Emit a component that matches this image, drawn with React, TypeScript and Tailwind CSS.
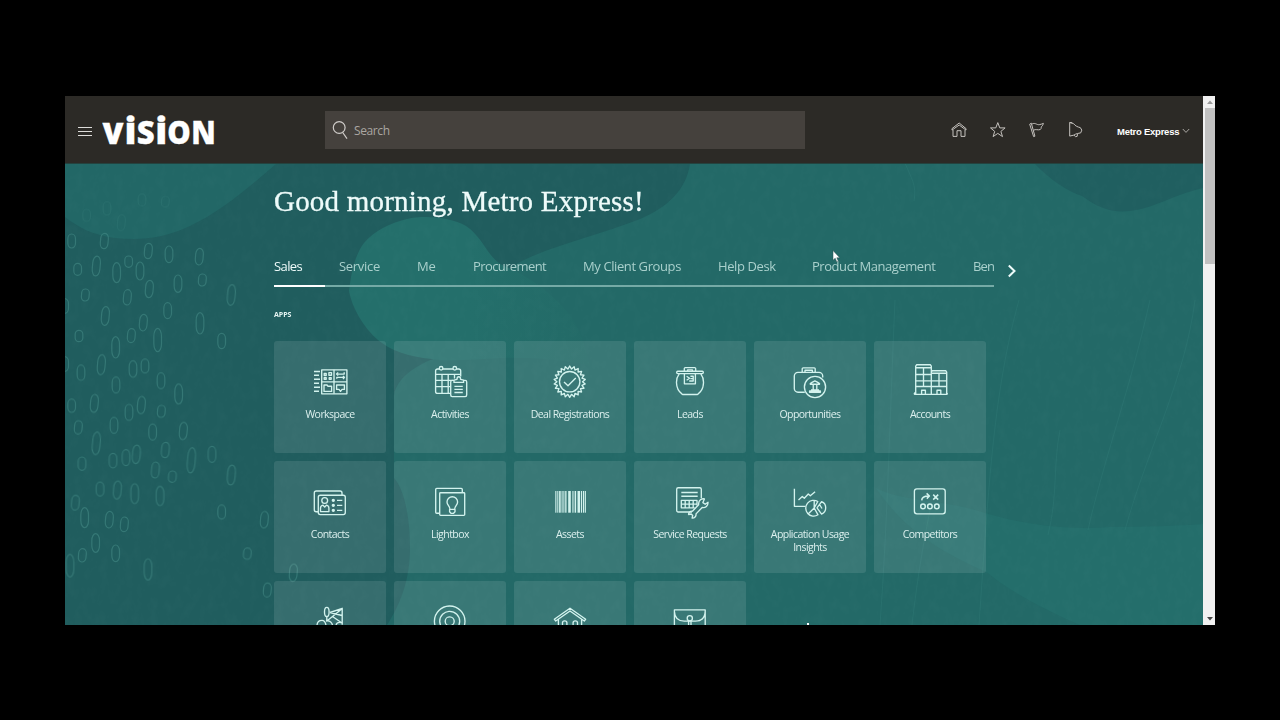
import type { ReactNode } from "react";

const tabs = [
  { label: "Sales", cls: "w-[65px] tracking-[-0.6px] text-[#eefbfa]" },
  { label: "Service", cls: "w-[78px] tracking-[-0.3px]" },
  { label: "Me", cls: "w-[56px] tracking-[-0.3px]" },
  { label: "Procurement", cls: "w-[110px] tracking-[-0.6px]" },
  { label: "My Client Groups", cls: "w-[135px] tracking-[-0.4px]" },
  { label: "Help Desk", cls: "w-[94px] tracking-[-0.4px]" },
  { label: "Product Management", cls: "w-[161px] tracking-[-0.45px]" },
  { label: "Ben", cls: "w-[21px] tracking-[-0.9px]" },
];

const burst = Array.from({ length: 44 }, (_, i) => {
  const r = i % 2 ? 12.8 : 15.7;
  const a = (i * Math.PI) / 22 - Math.PI / 2;
  return `${(19.7 + r * Math.cos(a)).toFixed(2)},${(20.7 + r * Math.sin(a)).toFixed(2)}`;
}).join(" ");

const bars: [number, number][] = [
  [5.3, 1.1], [7.3, 1], [9.1, 1.6], [11.6, 1], [13.4, 1], [15.2, 1.3], [18.2, 2.6], [22.4, 1.1],
  [24.6, 1.5], [27.5, 2.6], [31, 1.1], [33, 1.3], [35, 0.9],
];

const icons: Record<string, ReactNode> = {
  workspace: (
    <>
      <rect x="11.7" y="8.8" width="25.2" height="24" />
      <path d="M24 8.8v24M11.7 20.8h25.2M4 10.5h6M4 14.2h5M4 18.2h6M4 22.2h5M4 26.2h6M4 30.2h5" />
      <path d="M14.2 12.5h2v2h-2zM18.9 11.6h2.6v2.6h-2.6zM14.2 16.6h2v1.6h-2zM19.2 16.6h2v1.6h-2z" />
      <path d="M26.8 17.800v-1.400h7.600M34.200 11.300v1.800h-7.400M14 24h3l1 1.200h3.600v5.200H14zM26.6 24h7.8v4.4h-2.4l-1.500 2-1.500-2h-2.400z" />
      <path d="M28.200 11.500l-1.600 1.600 1.600 1.400M33 14.900l1.500 1.500-1.500 1.600" />
    </>
  ),
  activities: (
    <>
      <path d="M20.4 32.4H7.6a2 2 0 0 1-2-2V10a2 2 0 0 1 2-2h2M12.6 8h10.4M26.4 8h2.3a2 2 0 0 1 2 2v5.5" />
      <path d="M5.7 13.4h25M5.7 19.4h17M5.7 25.6h14.6M12 13.4v19M18.2 13.4v19M24.5 13.4v4" />
      <circle cx="11.1" cy="7.3" r="1.8" />
      <circle cx="24.8" cy="7.3" r="1.8" />
      <path d="M23.6 19.4h-1.4a1.5 1.5 0 0 0-1.5 1.5v13.2a1.5 1.5 0 0 0 1.5 1.5h13a1.5 1.5 0 0 0 1.5-1.5V20.9a1.5 1.5 0 0 0-1.5-1.5h-1.4M24 21.4v-2.2l3-.9c0-3.4 3.6-3.4 3.6 0l3 .9v2.2zM24.4 25.3h8.4M24.4 28.4h8.4M24.4 31.5h8.4" />
    </>
  ),
  deals: (
    <>
      <polygon points={burst} />
      <circle cx="19.7" cy="20.7" r="10.2" />
      <path d="M14 21l4 3.8 7.8-7.8" />
    </>
  ),
  leads: (
    <>
      <rect x="6.7" y="10.2" width="26.6" height="2.4" rx="1" />
      <path d="M14.3 10.2V7.600a1 1 0 0 1 1-1h9.400a1 1 0 0 1 1 1v2.600M17.600 10V8.800h4.800V10" />
      <path d="M9.200 12.800C7.200 15.400 6.400 18.600 6.500 21.800c.1 4.800 2.400 9 5.600 11.300q.6.400 1.400.4h13q.8 0 1.400-.4c3.200-2.300 5.500-6.500 5.600-11.300.1-3.200-.7-6.400-2.700-9" />
      <path d="M14.400 12.600v10.200h11V12.600M16.600 15.200l3 2-3 2M20.400 15.200h2.800v4.800h-4M20.400 17.600h2.800" />
    </>
  ),
  opportunities: (
    <>
      <path d="M14.800 31.200H8a3.700 3.700 0 0 1-3.700-3.700V15A3.700 3.700 0 0 1 8 11.300h21a3.700 3.700 0 0 1 3.700 3.700v1.600" />
      <path d="M12.200 11.300V7.800a1 1 0 0 1 1-1h11a1 1 0 0 1 1 1v3.500M15 11V9.200h7.400V11" />
      <circle cx="25" cy="26" r="10.600" />
      <path d="M20.300 22.600c1.500-1.200 3-1.900 4.600-2.700 1.600.8 3.100 1.500 4.600 2.700v.6h-9.200zM23.200 23.600v5M26.800 23.600v5M21 28.800h8M19.600 31.200h10.800v-1.300H19.600z" />
    </>
  ),
  accounts: (
    <>
      <path d="M5.700 33V5.200l1-1.500h13.600l1 1.500V33M21.300 11.200l1-1.500h13.400l1 1.500V33M4 33.400h33.600M4 33.400l1.200-2.200M37.600 33.400l-1.200-2.200" />
      <path d="M5.700 6.700h15.600M5.700 13.500h15.600M5.700 19.800h31M5.700 25.500h31M21.300 12.200h15.400M13.500 6.700v19M29 12.200v13.400M11.600 33.200v-4h3.800v4M27 33.200v-4h3.800v4" />
    </>
  ),
  contacts: (
    <>
      <path d="M8 30.700H6.300a2 2 0 0 1-2-2V12a2 2 0 0 1 2-2H30a2 2 0 0 1 2 2v2" />
      <rect x="8.300" y="14.200" width="27" height="19.400" rx="2" />
      <circle cx="14.700" cy="19.500" r="2.900" />
      <path d="M13 24.200c-1.800.4-2.500 1.200-2.500 2.800v3.600h8.400V27c0-1.600-.7-2.400-2.500-2.800l-1.700 1.800zM27 19.300h5.300M27 24.300h5.300M27 29.300h5.300" />
      <g fill="currentColor"><circle cx="23.300" cy="19.300" r="1" /><circle cx="23.300" cy="24.300" r="1" /><circle cx="23.300" cy="29.300" r="1" /></g>
    </>
  ),
  lightbox: (
    <>
      <path d="M9.500 32.200H6.700a1 1 0 0 1-1-1V8.400a1 1 0 0 1 1-1h24.600a1 1 0 0 1 1 1v3" />
      <rect x="9.700" y="11.700" width="25" height="22.600" rx=".8" />
      <path d="M20 28.400c0-3.400-3-4-3-7.400a5.300 5.300 0 0 1 10.600 0c0 3.400-3 4-3 7.400zM19.600 28.400h5.400v2.400l-1.400 1.500h-2.600l-1.400-1.500z" />
    </>
  ),
  assets: (
    <g fill="currentColor" stroke="none">
      {bars.map(([x, w]) => <rect key={x} x={x} y="10" width={w} height="21.700" />)}
    </g>
  ),
  requests: (
    <>
      <path d="M22 31H8.200a1.500 1.500 0 0 1-1.500-1.500V8.200a1.500 1.500 0 0 1 1.500-1.500h21.600a1.500 1.500 0 0 1 1.500 1.500V17M11.300 11.500h16.400M11.300 15.200h16.400" />
      <path d="M27 24.600v-5.200H11.300v7.400h13.400M11.300 23.100h15.800M15.200 19.400v7.400M19.200 19.400v7.400M23.200 19.400v7.400" />
      <path d="M34.400 17.900c-2.700-.6-5.500 1-5.700 4.200l-.1 1.600-6.200 6.500c-2.300-.2-3.900 1.400-3.800 3.300l2.600-.5 1.500 1.500-.6 2.600c2.400.2 4.300-1.700 3.900-4.200l6.200-6.400c3.300.6 6-1.800 5.800-5.200l-2.800 1.900-2.300-1.600z" />
    </>
  ),
  usage: (
    <>
      <path d="M4.400 7.700V25.300h11.200M8.500 19l3.800-3.500 2 1.800 4-4.300 2 1.700 4.800-4" />
      <path d="M27.800 20.500A7.900 7.900 0 1 0 28 33.800L24.200 27zM24.200 27V19.200M24.200 27l-5.600 5.400" />
      <path d="M27 26.800l4.600-6.200c2.600 1 4.100 3.400 4.100 6.200s-1.500 5.200-4.100 6.300zM29.500 23.500l2.500 4" />
    </>
  ),
  competitors: (
    <>
      <rect x="4.400" y="7.800" width="30.800" height="25" rx="2.500" />
      <g strokeWidth="1.500">
        <circle cx="13" cy="25.400" r="2.300" /><circle cx="19.900" cy="25.400" r="2.300" /><circle cx="26.800" cy="25.400" r="2.300" />
        <path d="M23.200 13.600l5 5M28.200 13.600l-5 5M11.700 19.400c.2-2.800 2.500-4.400 6.800-4.400M16.600 12.400l2.800 2.600-2.600 2.600" />
      </g>
    </>
  ),
  delivery: (
    <>
      <ellipse cx="16.800" cy="10.900" rx="2.300" ry="4.600" />
      <path d="M16.800 15.500V20M20 11.500l12.200-4.200v16.500M20 11.500l12 3M16.800 20l6-4.800 9.200-7.400M22.500 15.500L32 22M16 20c3-.6 5.500.4 6.500 4M26 24c.6-2 2.500-3 5-2.500M7 24c.3-3 2-4.600 5-4.600 2 0 3.200 1 4 4.600" />
    </>
  ),
  target: (
    <>
      <circle cx="19.700" cy="20.300" r="15.300" /><circle cx="19.700" cy="20.300" r="10" /><circle cx="19.700" cy="20.300" r="4.500" />
    </>
  ),
  house: (
    <>
      <path d="M4.300 18.200L20 7.200l15.700 11-1.400 1.800L20 10 5.700 20zM8.400 18.500V30M31.600 18.500V30" />
      <path d="M12.500 26v-4.200c0-2.600 4.400-2.600 4.400 0V26M23.100 26v-4.200c0-2.600 4.400-2.600 4.400 0V26" />
    </>
  ),
  portfolio: (
    <>
      <path d="M4.400 8.800h30.800V30H4.400zM4.400 10.500c.3 6.300 3.700 9.600 9.800 9.600h11.200c6.100 0 9.500-3.300 9.800-9.600" />
      <circle cx="19.800" cy="17.200" r="2.600" /><path d="M18.600 19.800v4.500M21 19.800v4.500" />
    </>
  ),
};

const apps = [
  { icon: "workspace", label: "Workspace" },
  { icon: "activities", label: "Activities" },
  { icon: "deals", label: "Deal Registrations" },
  { icon: "leads", label: "Leads" },
  { icon: "opportunities", label: "Opportunities" },
  { icon: "accounts", label: "Accounts" },
  { icon: "contacts", label: "Contacts" },
  { icon: "lightbox", label: "Lightbox" },
  { icon: "assets", label: "Assets" },
  { icon: "requests", label: "Service Requests" },
  { icon: "usage", label: "Application Usage Insights" },
  { icon: "competitors", label: "Competitors" },
  { icon: "delivery", label: "" },
  { icon: "target", label: "" },
  { icon: "house", label: "" },
  { icon: "portfolio", label: "" },
];

/* Raindrop outlines of the wallpaper: centre x, centre y, half height, in thirds of a pixel. */
const drops: [number, number, number][] = [
  [35, 243, 21], [133, 243, 23], [265, 273, 23], [327, 283, 25], [418, 290, 25], [53, 328, 18], [109, 318, 30],
  [170, 338, 30], [206, 305, 17], [240, 333, 27], [354, 371, 26], [427, 360, 18], [268, 387, 26], [202, 412, 23],
  [76, 405, 18], [514, 405, 31], [136, 468, 28], [323, 452, 24], [420, 490, 32], [250, 488, 25], [57, 528, 17],
  [214, 527, 21], [293, 540, 35], [167, 562, 32], [485, 543, 23], [124, 614, 30], [63, 638, 23], [219, 627, 25],
  [255, 618, 21], [303, 662, 24], [168, 675, 24], [356, 702, 30], [103, 730, 27], [35, 737, 20], [244, 735, 26],
  [207, 757, 24], [304, 754, 18], [162, 796, 24], [55, 802, 20], [278, 816, 24], [370, 813, 26], [109, 850, 34],
  [316, 870, 23], [229, 883, 28], [198, 893, 24], [159, 902, 22], [66, 911, 20], [394, 901, 38], [456, 883, 24],
  [286, 930, 24], [337, 950, 17], [514, 945, 30], [120, 987, 21], [172, 990, 27], [224, 1001, 30], [300, 1008, 29],
  [46, 1028, 22], [74, 1073, 30], [148, 1079, 25], [193, 1093, 22], [485, 1056, 21], [613, 1079, 25], [107, 1149, 28],
  [67, 1186, 20], [167, 1180, 25], [562, 1181, 17], [30, 1217, 34], [264, 1228, 32], [622, 1290, 21], [700, 1238, 26],
  [141, 145, 20], [80, 166, 18], [184, 188, 24], [246, 120, 18], [316, 125, 16], [14, 438, 22], [14, 612, 22],
];

function Wallpaper() {
  return (
    <svg className="absolute inset-0 h-full w-full" viewBox="65 164 1138 461" preserveAspectRatio="none">
      <defs>
        <linearGradient id="blob" x1="0" x2="1" y1="0" y2="0">
          <stop offset="0.5" stopColor="#246f6b" />
          <stop offset="1" stopColor="#236a67" />
        </linearGradient>
        <filter id="grain" x="0" y="0" width="100%" height="100%">
          <feTurbulence type="fractalNoise" baseFrequency="0.12 0.08" numOctaves="3" seed="4" />
          <feColorMatrix values="0 0 0 0 0.6  0 0 0 0 0.9  0 0 0 0 0.85  0.5 0 0 0 -0.2" />
        </filter>
      </defs>
      <rect x="65" y="164" width="1138" height="461" fill="#236967" />
      <path d="M65 164H690C686 190 668 207 640 219C600 235 545 247 515 265L433 359C415 366 397 378 394 395V478C405 490 410 520 410 548C410 580 400 605 387 625H65Z" fill="#205d5e" />
      <path d="M65 164H276C246 190 220 212 190 226C160 240 138 240 115 238C92 235 78 227 65 217Z" fill="#226766" />
      <path d="M407 219C425 215 450 217 466 226C484 238 487 258 504 266C530 276 558 298 572 318C584 338 586 352 590 366C570 360 530 357 500 358C475 359 450 362 432 359C408 357 390 350 378 340C364 328 352 308 349 291C351 277 353 258 364 243C374 231 390 223 407 219Z" fill="url(#blob)" />
      <path d="M1035 164C1048 178 1068 192 1082 196C1098 208 1112 213 1130 211C1155 208 1170 196 1203 188V164Z" fill="#205f60" />
      <path d="M876 488C900 501 940 500 975 510C1025 526 1070 530 1110 527C1145 527 1175 526 1203 524V625H1080C1050 612 1010 592 988 573C945 553 907 534 876 488Z" fill="#246e6b" />
      <g fill="none" stroke="#45918a" strokeWidth="1" opacity=".18">
        <path d="M895 300c-5 110-7 215-15 325M1019 300c-25 90-30 180-40 325M1195 300c-10 80-48 150-70 230M1150 300c-20 90-45 155-62 230M1060 430c-7 35-2 65-12 105M930 510c-9 45-14 80-18 115M905 163c6 15 12 22 9 38" />
      </g>
      <rect x="65" y="164" width="1138" height="461" filter="url(#grain)" opacity=".08" />
      <g transform="translate(60 160) scale(.33333)" fill="none" stroke="#4b938d" strokeWidth="3.600" opacity=".5">
        {drops.map(([x, y, h]) => (
          <rect key={`${x}-${y}`} x={x - 11.5} y={y - h} width="23" height={h * 2} rx="11.500" ry={h * 0.7} transform={`rotate(${x % 3 === 1 ? 5 : 0} ${x} ${y})`} opacity={y < 200 ? 0.35 : 1} />
        ))}
      </g>
    </svg>
  );
}

function Header() {
  return (
    <header className="flex h-[68px] shrink-0 items-center border-b border-[#24433f] bg-[#2c2a26] pl-[13px]">
      <svg className="mt-1 h-3 w-[14px] text-[#dddcd9]" viewBox="0 0 14 12" stroke="currentColor" strokeWidth="1.200">
        <path d="M0 1.500h14M0 5.500h14M0 9.500h14" />
      </svg>
      <svg className="ml-[10px] h-[50px] w-[116px]" viewBox="102 105 116 50" fill="#fff" stroke="#fff" strokeWidth=".3" fontFamily="'Open Sans', 'Noto Sans', sans-serif" fontWeight="800">
        <text y="144.300" fontSize="37" x="102.500" textLength="21" lengthAdjust="spacingAndGlyphs">v</text>
        <text y="144.300" fontSize="37" x="124.500">i</text>
        <text y="144.300" fontSize="31" x="136.800">S</text>
        <text y="144.300" fontSize="37" x="155.300">i</text>
        <text y="144.300" fontSize="31" x="167.300" textLength="23.500" lengthAdjust="spacingAndGlyphs">O</text>
        <text y="144.300" fontSize="31" x="191.300" textLength="24.500" lengthAdjust="spacingAndGlyphs">N</text>
      </svg>
      <div className="ml-[107px] flex h-[38px] w-[480px] items-center bg-[#45413d] pl-[7px]">
        <svg className="h-5 w-4 text-[#d0cdca]" viewBox="0 0 16 20" fill="none" stroke="currentColor" strokeWidth="1.200">
          <circle cx="7.200" cy="7.500" r="5.900" />
          <path d="M10.700 12.500l4.300 6.200" />
        </svg>
        <span className="ml-[6px] mt-[2px] text-[12px] tracking-[-0.700px] text-[#aaa6a1]"><span className="tracking-[-0.400px]">Search</span></span>
      </div>
      <div className="ml-[145px] flex items-center gap-[21px] text-[#c4c1bd]">
        <svg className="h-[18px] w-[18px]" viewBox="0 0 18 18" fill="none" stroke="currentColor" strokeWidth="1">
          <path d="M2 7.600L9.200 2l6.800 5.600v1.500L9.200 4 2 9.100zM3 9v6.400h4V9.700h4v5.700h4V9" />
        </svg>
        <svg className="h-[18px] w-[18px]" viewBox="0 0 18 18" fill="none" stroke="currentColor" strokeWidth="1">
          <path d="M8.800 1.600l2 5.300h5.300l-4.200 3.500 1.600 5.200-4.700-3.200-4.700 3.200 1.600-5.200-4.200-3.500h5.300z" />
        </svg>
        <svg className="h-[18px] w-[18px]" viewBox="0 0 18 18" fill="none" stroke="currentColor" strokeWidth="1">
          <path d="M1.700 3.200l1.600-1 3.600 13-1.300.4zM3.700 3.300c3-2.300 5 .7 7.500.4 1.600-.2 2.600-.8 4.200-1.300-.6 2-1.300 3-2.300 3.600.3 1.200 0 1.800-.8 2.500-2.500 1-4.500-.8-6.900.800" />
        </svg>
        <svg className="h-[18px] w-[18px]" viewBox="0 0 18 18" fill="none" stroke="currentColor" strokeWidth="1">
          <path d="M2.700 1.500v13.600l4.200-1c2.500-1.700 4.400-1.700 6.800-2.200l1.100-2.800-1.500-2.500C10.700 6 8.500 5.200 6.500 2.600zM7 14.200l1.600 1.500 1.600-.4.300-2.200M2.700 1.500l2.500.2" />
        </svg>
      </div>
      <span className="ml-[32px] mt-[4px] w-[63px] whitespace-nowrap font-['Liberation_Sans',Arial,sans-serif] text-[9.500px] font-bold leading-3 tracking-[-0.250px] text-white">Metro Express</span>
      <svg className="ml-[2px] mt-[3px] h-2 w-2" viewBox="0 0 8 8" fill="none" stroke="#aaa7a3" strokeWidth="1"><path d="M.8 2l3.200 3.400L7.200 2" /></svg>
    </header>
  );
}

export default function App() {
  return (
    <div className="h-[720px] w-[1280px] overflow-hidden bg-black pl-[65px] pt-24 font-['Open_Sans','Noto_Sans',sans-serif]">
      <div className="flex h-[529px] w-[1150px] overflow-hidden">
        <div className="flex w-[1138px] shrink-0 flex-col">
          <Header />
          <main className="relative flex-1 overflow-hidden">
            <Wallpaper />
            <div className="relative box-content w-[760px] pl-[209px] pt-[20px]">
              <h1 className="h-[34px] whitespace-nowrap font-['Liberation_Serif','Times_New_Roman',serif] text-[29px] leading-[34px] tracking-[0.210px] text-[#eefbfa] [-webkit-text-stroke:0.3px_#eefbfa]">Good morning, Metro Express!</h1>
              <div className="mt-[36px] flex">
                <nav className="flex h-[33px] w-[720px] overflow-hidden whitespace-nowrap text-[13px] leading-[24px] text-[#a9d0cc]">
                  {tabs.map((t) => <span key={t.label} className={`shrink-0 ${t.cls}`}>{t.label}</span>)}
                </nav>
                <svg className="ml-[13px] mt-[10px] h-[14px] w-[10px]" viewBox="0 0 10 14" fill="none" stroke="#eefbfa" strokeWidth="2"><path d="M1.800 1.500l5.700 5.500-5.700 5.500" /></svg>
              </div>
              <div className="-mt-[2px] h-[2px] w-[720px] bg-[#75aaa6]"><div className="h-full w-[51px] bg-white" /></div>
              <h2 className="mt-[23px] h-[10px] text-[7px] font-bold leading-[10px] tracking-[-0.050px] text-[#e7f6f4]">APPS</h2>
              <div className="mt-[21px] grid w-[712px] grid-cols-6 gap-2">
                {apps.map((a) => (
                  <div key={a.icon} className="flex h-[112px] flex-col items-center rounded-[3px] bg-white/10 pt-5">
                    <svg className="h-10 w-10 shrink-0 text-[#d3f3ee]" viewBox="0 0 40 40" fill="none" stroke="currentColor" strokeWidth="1.350" strokeLinejoin="round">{icons[a.icon]}</svg>
                    <span className="mt-[7px] w-[96px] text-center text-[10.500px] leading-[12.500px] tracking-[-0.550px] text-[#dcf0ee]">{a.label}</span>
                  </div>
                ))}
              </div>
            </div>
            <div className="absolute left-[742px] top-[459px] h-[2px] w-[2px] bg-white" />
            <svg className="absolute left-[767px] top-[86px] h-[14px] w-[9px]" viewBox="0 0 9 14"><path d="M1 .5v9.700l2.200-2 1.600 3.800 1.600-.7-1.600-3.500h3z" fill="#fff" stroke="#2a4d4c" strokeWidth=".5" /></svg>
          </main>
        </div>
        <div className="flex w-3 flex-col items-center bg-[#f1f1f1] pl-px">
          <div className="flex h-[12px] w-full items-center justify-center"><svg className="h-1 w-[6px]" viewBox="0 0 6 4"><path d="M0 4l3-3.500L6 4z" fill="#9a9a9a" /></svg></div>
          <div className="h-[156px] w-[10px] bg-[#c1c1c1]" />
          <div className="flex flex-1 items-end pb-1"><svg className="h-1 w-[6px]" viewBox="0 0 6 4"><path d="M0 0l3 3.500L6 0z" fill="#444" /></svg></div>
        </div>
      </div>
    </div>
  );
}
